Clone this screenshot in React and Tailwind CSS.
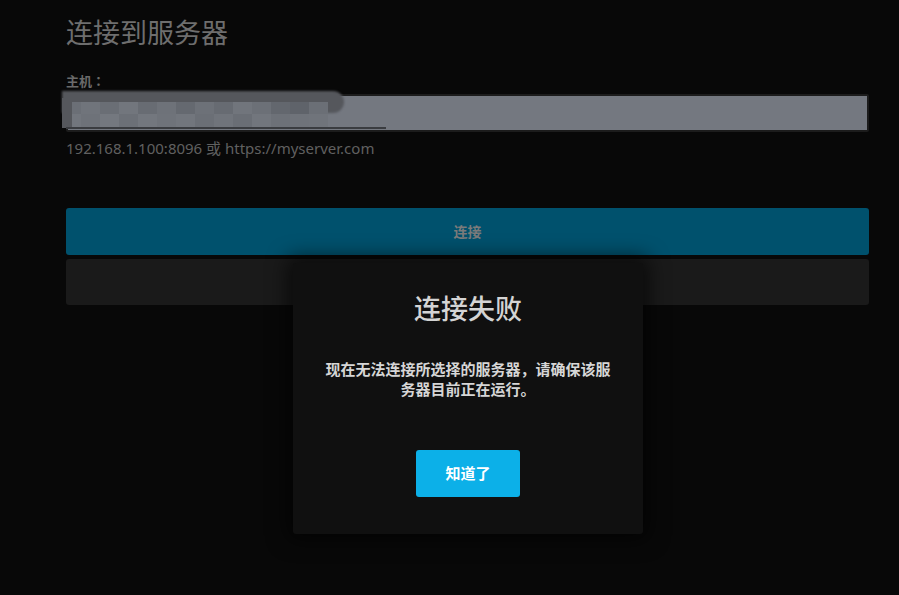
import React from "react";

const blocks = [
  ["#6b6f76","#70747b","#6a6e75","#72767d","#686c73","#6e7279","#656970","#6d7178","#676b72","#71757c","#6c7077","#63676e","#5f636a","#6b6f76"],
  ["#72767d","#6e7279","#74787f","#6c7077","#73777e","#6f737a","#72767d","#6b6f76","#70747b","#6a6e75","#72767d","#6d7178","#6f737a","#70747b"],
];

export default function App() {
  return (
    <div
      className="relative w-full h-[595px] overflow-hidden bg-[#080808]"
      style={{ fontFamily: '"Noto Sans", "Noto Sans CJK SC", sans-serif' }}
    >
      <div className="pl-[66px] pr-[30px] pt-[16px]">
        <h1 className="text-[27px] leading-[33px] text-[#6e6e6e]">连接到服务器</h1>
        <div className="mt-[23px] text-[13px] leading-[18px] font-bold text-[#6a6a6a]">
          主机<span style={{ fontFamily: '"Noto Sans CJK TC", sans-serif' }}>：</span>
        </div>
        <div className="relative mt-[4px]">
          <div className="h-[38px] rounded-[2px] border-2 border-[#1c1c1c] bg-[#747880]" />
          <div className="absolute left-[-4px] top-[-3px] w-[282px] h-[22px] rounded-r-[14px] bg-[#55575c] blur-[1px]" />
          <div className="absolute left-[-4px] top-[8px] grid grid-cols-[repeat(14,19px)] grid-rows-[12px_13px] blur-[0.5px]">
            {blocks.flatMap((row, r) =>
              row.map((c, i) => (
                <div key={r + "-" + i} style={{ backgroundColor: c }} />
              ))
            )}
          </div>
          <div className="absolute left-[-4px] top-[4px] w-[10px] h-[30px] bg-[#55575c]" />
          <div className="absolute left-[0px] top-[33px] w-[320px] h-[2px] bg-[#3a3c40] blur-[0.5px]" />
        </div>
        <div className="mt-[6px] text-[15px] leading-[20px] text-[#606060]">
          192.168.1.100:8096 或 https://myserver.com
        </div>
        <button className="mt-[50px] w-full h-[47px] rounded-[3px] bg-[#00516d] text-[14px] font-bold text-[#7b7b7b]">
          连接
        </button>
        <div className="mt-[4px] h-[46px] rounded-[3px] bg-[#1a1a1a]" />
      </div>

      <div className="absolute left-[293px] top-[263px] w-[350px] h-[271px] rounded-[3px] bg-[#101010] shadow-[0_0_20px_6px_rgba(0,0,0,0.6)] flex flex-col items-center px-[30px]">
        <div className="mt-[29px] text-[27px] leading-[34px] font-medium text-[#d4d4d4]">连接失败</div>
        <p className="mt-[33px] text-[15px] leading-[20px] font-bold text-[#d6d6d6] text-center">
          现在无法连接所选择的服务器，请确保该服务器目前正在运行。
        </p>
        <button className="mt-[51px] w-[104px] h-[47px] rounded-[3px] bg-[#0cb0e8] text-white text-[15px] font-bold">
          知道了
        </button>
      </div>
    </div>
  );
}
